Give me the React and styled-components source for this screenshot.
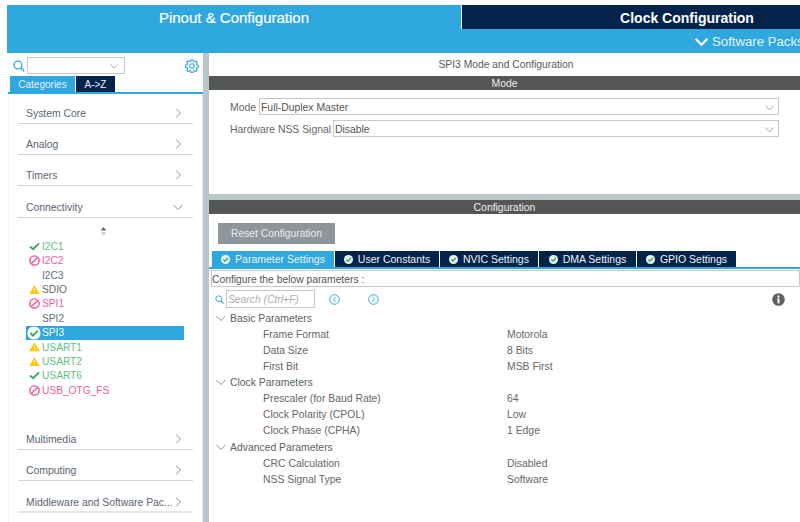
import React from "react";
import styled, { createGlobalStyle } from "styled-components";

const Global = createGlobalStyle`
  html, body { margin: 0; padding: 0; background: #fff; overflow: hidden; }
  * { box-sizing: border-box; }
  body { font-family: "Liberation Sans", Arial, sans-serif; }
`;

const Page = styled.div`
  width: 800px; height: 522px; padding: 5px 0 0 7px; overflow: hidden;
  display: flex; flex-direction: column; background: #fff;
`;
const Header = styled.header`
  height: 48px; flex: none; background: #2fa7df; display: flex; flex-direction: column;
`;
const MainTabs = styled.div`
  height: 24px; display: flex;
`;
const MainTab = styled.div`
  width: ${p => p.$w}px; flex: none; font-size: ${p => p.$active ? 15 : 14}px; font-weight: ${p => p.$active ? 400 : 700};
  line-height: 26px; text-align: center; color: #fff;
  padding-left: ${p => p.$pl || 0}px;
  background: ${p => p.$active ? "transparent" : "#03234b"};
  border-left: ${p => p.$active ? "none" : "1px solid #fff"};
  -webkit-text-stroke: ${p => p.$active ? "0.2px #fff" : "0"};
`;
const PacksRow = styled.div`
  height: 24px; display: flex; align-items: center; color: #e6f5fc; font-size: 13.2px;
  padding-left: 688px; gap: 4px; white-space: nowrap; overflow: hidden;
  svg { flex: none; }
`;
const Body = styled.div`
  flex: 1; display: flex; min-height: 0;
`;
const Left = styled.aside`
  width: 196px; flex: none; background: #fff; display: flex; flex-direction: column;
  font-size: 10.5px; color: #5b6470;
`;
const Splitter = styled.div`
  width: 6px; flex: none; background: #b9c6c9;
`;
const SearchRow = styled.div`
  height: 23px; flex: none; display: flex; align-items: center; padding: 2px 0 0 6px;
`;
const Combo = styled.div`
  width: 98px; height: 17px; margin-left: 2px; border: 1px solid #c4c8c8; background: #fff;
  display: flex; align-items: center; justify-content: flex-end; padding-right: 6px;
`;
const GearWrap = styled.div`
  margin-left: auto; margin-right: 4px; display: flex;
`;
const SideTabs = styled.div`
  height: 18px; flex: none; display: flex; gap: 1px; padding: 0 0 0 2px;
  border-bottom: 2px solid #2fa7df; margin-left: 1px;
`;
const SideTab = styled.div`
  width: ${p => p.$w}px; height: 16px; font-size: 10px; line-height: 17px; text-align: center; color: #eef;
  background: ${p => p.$active ? "#2fa7df" : "#03234b"};
`;
const CatList = styled.div`
  display: flex; flex-direction: column; padding: 8px 9px 0 9px; flex: 1; min-height: 0;
  border-left: 1px solid #f0f2f2; margin-left: 1px; border-right: 1px solid #e9eded;
`;
const Cat = styled.div`
  height: ${p => p.$h}px; flex: none; display: flex; align-items: flex-end; justify-content: space-between;
  border-bottom: ${p => p.$thick ? 2 : 1}px solid ${p => p.$thick ? "#e3e6e6" : "#cfd4d4"};
  padding: 0 10px ${p => p.$thick ? 2.5 : 3.5}px 8px; font-size: 10.4px; color: #5a6472; line-height: 13px;
  white-space: nowrap;
`;
const CatArrow = styled.span`
  display: flex; margin-bottom: 2px;
`;
const Sort = styled.div`
  height: 21.6px; display: flex; justify-content: center; padding: 9px 4px 0 0; flex: none;
`;
const PinList = styled.div`
  display: flex; flex-direction: column; flex: none; height: 188.8px;
`;
const Pin = styled.div`
  height: 14.4px; width: 158px; margin-left: 8px; display: flex; align-items: center; font-size: 10.2px;
  color: ${p => p.$selected ? "#fff" : p.$color};
  background: ${p => p.$selected ? "#2fa7df" : "transparent"};
  line-height: 14px;
`;
const PinIcon = styled.span`
  width: 16px; flex: none; display: flex; justify-content: center; align-items: center; margin-bottom: 1px;
`;
const Right = styled.main`
  flex: 1; min-width: 0; display: flex; flex-direction: column; font-size: 10.4px; color: #5f6468;
`;
const Title = styled.div`
  height: 23px; flex: none; text-align: center; line-height: 23px; font-size: 10.3px; color: #555b60; padding-left: 3px;
`;
const Bar = styled.div`
  height: 14px; flex: none; background: #555755; color: #eee; text-align: center; line-height: 16px; font-size: 10.4px;
`;
const ModeBox = styled.div`
  height: 104px; flex: none; padding: 8px 21px 0 21px; display: flex; flex-direction: column; gap: 5px;
`;
const ModeRow = styled.div`
  display: flex; align-items: center; height: 17px; color: #666; line-height: 17px;
`;
const ModeLabel = styled.span`
  width: ${p => p.$w}px; flex: none; white-space: nowrap; padding-top: 1px;
`;
const Sel = styled.div`
  flex: 1; height: 17px; border: 1px solid #c4c8c8; display: flex; align-items: center; justify-content: space-between;
  padding: 1px 4px 0 1px; color: #555; background: #fff;
`;
const HSplit = styled.div`
  height: 6px; flex: none; background: #b9c6c9;
`;
const ConfigBody = styled.div`
  flex: 1; display: flex; flex-direction: column; min-height: 0;
`;
const ResetBtn = styled.div`
  margin: 9px 0 0 9px; width: 117px; height: 21px; flex: none; background: #8f969b; color: #e8eaec;
  font-size: 10.3px; line-height: 22px; text-align: center;
`;
const CfgTabs = styled.div`
  margin-top: 7px; height: 18px; flex: none; display: flex; gap: 1px; padding-left: 3px; border-bottom: 2px solid #2fa7df;
`;
const CfgTab = styled.div`
  width: ${p => p.$w}px; height: 16px; display: flex; align-items: center; justify-content: center; gap: 5px;
  background: ${p => p.$active ? "#2fa7df" : "#03234b"}; color: #eef3f6; font-size: 10.5px;
`;
const Configure = styled.div`
  margin: 1px 0 0 2px; height: 17px; flex: none; border: 1px solid #c4c8c8; font-size: 10.3px; line-height: 18px; color: #555;
`;
const ToolRow = styled.div`
  height: 20px; margin-top: 2px; flex: none; display: flex; align-items: center; padding-left: 6px;
`;
const SearchInput = styled.div`
  width: 89px; height: 18px; margin-left: 2px; border: 1px solid #c4c8c8; font-size: 10.3px; font-style: italic;
  color: #a8adb0; line-height: 18px; padding-left: 1px;
`;
const NavBtns = styled.div`
  display: flex; gap: 28px; margin-left: 14px;
`;
const InfoWrap = styled.div`
  margin-left: auto; margin-right: 15px; display: flex;
`;
const Tree = styled.div`
  margin-top: 1px; display: flex; flex-direction: column; flex: none;
`;
const Group = styled.div`
  height: 16px; display: flex; align-items: center; padding-left: 7px; color: #5a5f62; gap: 4px;
  margin-top: ${p => p.$offset || 0}px;
`;
const Param = styled.div`
  height: 16px; display: grid; grid-template-columns: 244px 1fr; align-items: center; padding-left: 54px; color: #666;
`;

const Chevron = ({ dir = "right", size = 10, color = "#8a9196", w = 1 }) => (
  <svg width={size} height={size} viewBox="0 0 10 10" fill="none" stroke={color} strokeWidth={w}>
    {dir === "right" ? <path d="M3 0.5 L7.5 5 L3 9.5" /> : <path d="M0.5 3 L5 7.5 L9.5 3" />}
  </svg>
);
const Search = ({ size = 12 }) => (
  <svg width={size} height={size} viewBox="0 0 12 12" fill="none" stroke="#2fa7df" strokeWidth="1.3">
    <circle cx="5" cy="5" r="3.9" /><path d="M8 8 L11.3 11.3" strokeWidth="1.6" />
  </svg>
);
const Gear = () => (
  <svg width="14" height="14" viewBox="0 0 14 14" fill="none" stroke="#2fa7df" strokeWidth="1.1">
    <circle cx="7" cy="7" r="2.2" />
    <path d="M6 .8h2l.3 1.6 1.2.5 1.4-.9 1.4 1.4-.9 1.4.5 1.2 1.6.3v2l-1.6.3-.5 1.2.9 1.4-1.4 1.4-1.4-.9-1.2.5-.3 1.6H6l-.3-1.6-1.2-.5-1.4.9-1.4-1.4.9-1.4-.5-1.2-1.6-.3V6l1.6-.3.5-1.2-.9-1.4 1.4-1.4 1.4.9 1.2-.5z" />
  </svg>
);
const Check = () => (
  <svg width="11" height="9" viewBox="0 0 12 10" fill="none" stroke="#3aa860" strokeWidth="2.2"><path d="M1 5 L4.5 8 L11 1.5" /></svg>
);
const Ban = () => (
  <svg width="11" height="11" viewBox="0 0 11 11" fill="none" stroke="#f0509a" strokeWidth="1.4">
    <circle cx="5.5" cy="5.5" r="4.6" /><path d="M2.4 8.6 L8.6 2.4" />
  </svg>
);
const Warn = () => (
  <svg width="11" height="9.5" viewBox="0 0 12 10"><path d="M6 0 L12 10 L0 10 Z" fill="#fbc912" /><path d="M6 3.2v3.4M6 7.6v1.2" stroke="#fff6c8" strokeWidth="1" /></svg>
);
const OkWhite = () => (
  <svg width="14" height="14" viewBox="0 0 14 14">
    <circle cx="7" cy="7" r="6.6" fill="#fff" />
    <path d="M3.4 7 L6 9.6 L10.8 4.6" fill="none" stroke="#3aa860" strokeWidth="2" />
  </svg>
);
const OkTab = () => (
  <svg width="9" height="9" viewBox="0 0 9 9">
    <circle cx="4.5" cy="4.5" r="4.5" fill="#e6f5ea" />
    <path d="M2.2 4.6 L3.9 6.2 L6.9 3" fill="none" stroke="#2f9c5a" strokeWidth="1.3" />
  </svg>
);
const Nav = ({ dir }) => (
  <svg width="11" height="11" viewBox="0 0 11 11" fill="none" stroke="#2fa7df" strokeWidth="1">
    <circle cx="5.5" cy="5.5" r="4.8" />
    <path d={dir === "l" ? "M6.5 3.3 L4.3 5.5 L6.5 7.7" : "M4.5 3.3 L6.7 5.5 L4.5 7.7"} />
  </svg>
);
const Info = () => (
  <svg width="13" height="13" viewBox="0 0 13 13">
    <circle cx="6.5" cy="6.5" r="6.3" fill="#5c6062" />
    <rect x="5.5" y="5.4" width="2" height="5" fill="#fff" /><rect x="5.5" y="2.6" width="2" height="1.9" fill="#fff" />
  </svg>
);
const SortIcon = () => (
  <svg width="7" height="9" viewBox="0 0 7 9"><path d="M3.5 0 L6.5 3.6 H.5 Z" fill="#6a6f72" /><path d="M.5 5 H6.5 L3.5 9 Z" fill="#d0d3d4" /></svg>
);

const green = "#62bd82", pink = "#ef5c9e", grey = "#666c70";
const pins = [
  ["I2C1", green, <Check />], ["I2C2", pink, <Ban />], ["I2C3", grey, null], ["SDIO", grey, <Warn />],
  ["SPI1", pink, <Ban />], ["SPI2", grey, null], ["SPI3", "#fff", <OkWhite />, true],
  ["USART1", green, <Warn />], ["USART2", green, <Warn />], ["USART6", green, <Check />], ["USB_OTG_FS", pink, <Ban />],
];
const groups = [
  ["Basic Parameters", 0, [["Frame Format", "Motorola"], ["Data Size", "8 Bits"], ["First Bit", "MSB First"]]],
  ["Clock Parameters", 0, [["Prescaler (for Baud Rate)", "64"], ["Clock Polarity (CPOL)", "Low"], ["Clock Phase (CPHA)", "1 Edge"]]],
  ["Advanced Parameters", 1, [["CRC Calculation", "Disabled"], ["NSS Signal Type", "Software"]]],
];
const tabs = [["Parameter Settings", 122, true], ["User Constants", 104], ["NVIC Settings", 98], ["DMA Settings", 97], ["GPIO Settings", 99]];

const Category = ({ name, open, h = 31, thick }) => (
  <Cat $h={h} $thick={thick}>
    {name}
    <CatArrow><Chevron dir={open ? "down" : "right"} /></CatArrow>
  </Cat>
);

export default function App() {
  return (
    <Page>
      <Global />
      <Header>
        <MainTabs>
          <MainTab $w={454} $active>Pinout &amp; Configuration</MainTab>
          <MainTab $w={339} $pl={112}>Clock Configuration</MainTab>
        </MainTabs>
        <PacksRow><Chevron dir="down" size={13} color="#fff" w={1.7} />Software Packs</PacksRow>
      </Header>
      <Body>
        <Left>
          <SearchRow>
            <Search />
            <Combo><Chevron dir="down" size={8} /></Combo>
            <GearWrap><Gear /></GearWrap>
          </SearchRow>
          <SideTabs>
            <SideTab $w={65} $active>Categories</SideTab>
            <SideTab $w={39}>A-&gt;Z</SideTab>
          </SideTabs>
          <CatList>
            <Category h={22} name="System Core" />
            <Category name="Analog" />
            <Category name="Timers" />
            <Category h={32} name="Connectivity" open />
            <Sort><SortIcon /></Sort>
            <PinList>
              {pins.map(([name, color, icon, selected]) => (
                <Pin key={name} $color={color} $selected={selected}><PinIcon>{icon}</PinIcon>{name}</Pin>
              ))}
            </PinList>
            <Category h={22} name="Multimedia" />
            <Category name="Computing" />
            <Category h={32} thick name="Middleware and Software Pac..." />
          </CatList>
        </Left>
        <Splitter />
        <Right>
          <Title>SPI3 Mode and Configuration</Title>
          <Bar>Mode</Bar>
          <ModeBox>
            <ModeRow><ModeLabel $w={29}>Mode</ModeLabel><Sel>Full-Duplex Master<Chevron dir="down" size={9} /></Sel></ModeRow>
            <ModeRow><ModeLabel $w={103}>Hardware NSS Signal</ModeLabel><Sel>Disable<Chevron dir="down" size={9} /></Sel></ModeRow>
          </ModeBox>
          <HSplit />
          <Bar>Configuration</Bar>
          <ConfigBody>
            <ResetBtn>Reset Configuration</ResetBtn>
            <CfgTabs>
              {tabs.map(([t, w, a]) => <CfgTab key={t} $w={w} $active={a}><OkTab />{t}</CfgTab>)}
            </CfgTabs>
            <Configure>Configure the below parameters :</Configure>
            <ToolRow>
              <Search size={9} />
              <SearchInput>Search (Ctrl+F)</SearchInput>
              <NavBtns><Nav dir="l" /><Nav dir="r" /></NavBtns>
              <InfoWrap><Info /></InfoWrap>
            </ToolRow>
            <Tree>
              {groups.map(([g, offset, items]) => (
                <React.Fragment key={g}>
                  <Group $offset={offset}><Chevron dir="down" size={10} />{g}</Group>
                  {items.map(([k, v]) => <Param key={k}><span>{k}</span><span>{v}</span></Param>)}
                </React.Fragment>
              ))}
            </Tree>
          </ConfigBody>
        </Right>
      </Body>
    </Page>
  );
}
